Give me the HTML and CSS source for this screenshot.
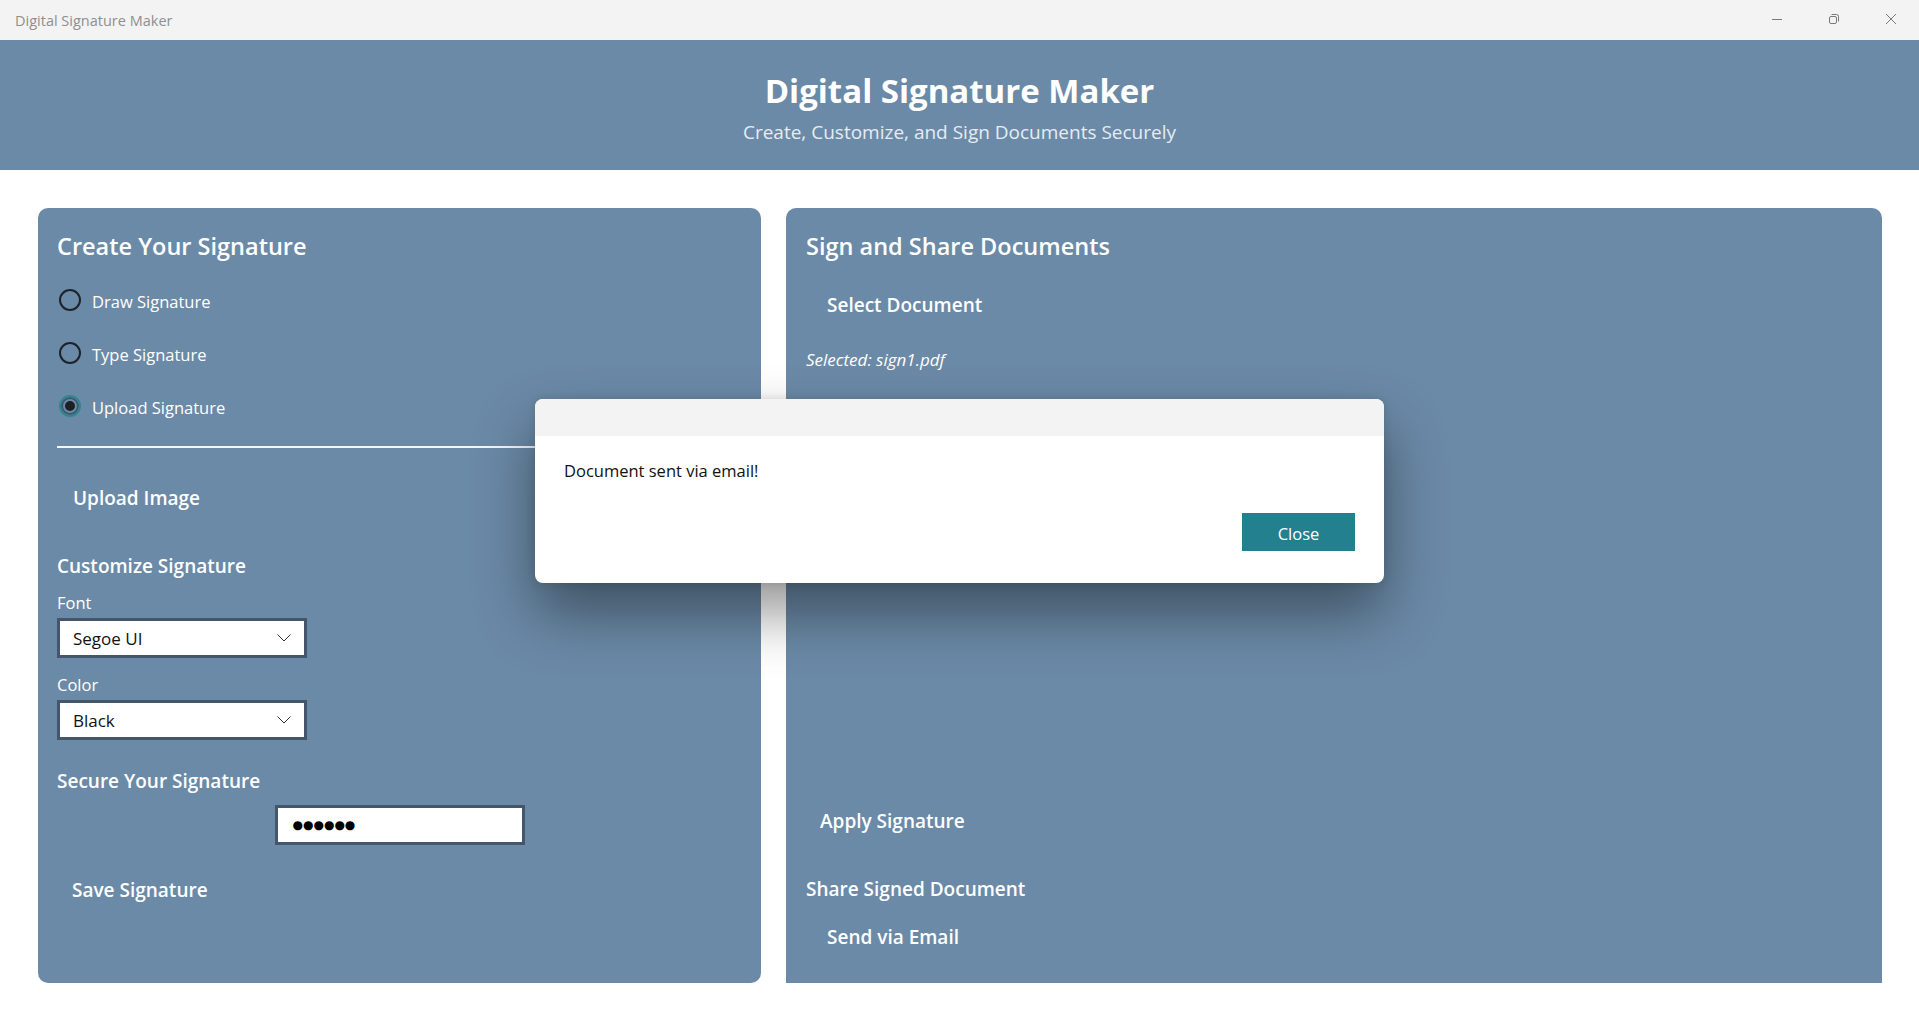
FILE: index.html
```html
<!DOCTYPE html>
<html lang="en">
<head>
  <meta charset="UTF-8">
  <title>Digital Signature Maker</title>
  <link rel="stylesheet" href="styles.css">
</head>
<body>
  <!-- window chrome -->
  <div class="titlebar">
    <span class="app-name">Digital Signature Maker</span>
    <div class="caption">
      <span class="cap-btn">
        <svg width="12" height="12" viewBox="0 0 12 12"><path d="M1 6.5h10" stroke="#7a7a7a" stroke-width="1"/></svg>
      </span>
      <span class="cap-btn">
        <svg width="12" height="12" viewBox="0 0 12 12" fill="none" stroke="#7a7a7a" stroke-width="1">
          <rect x="1.5" y="3.5" width="7" height="7" rx="1.5"/>
          <path d="M3.5 1.5h5a2 2 0 0 1 2 2v5"/>
        </svg>
      </span>
      <span class="cap-btn">
        <svg width="12" height="12" viewBox="0 0 12 12"><path d="M1 1l10 10M11 1L1 11" stroke="#7a7a7a" stroke-width="1"/></svg>
      </span>
    </div>
  </div>

  <header class="app-header">
    <h1>Digital Signature Maker</h1>
    <p>Create, Customize, and Sign Documents Securely</p>
  </header>

  <main class="content">
    <section class="panel panel-left">
      <h2>Create Your Signature</h2>

      <div class="radio-list">
        <label class="radio"><span class="dot"></span><span class="radio-text">Draw Signature</span></label>
        <label class="radio"><span class="dot"></span><span class="radio-text">Type Signature</span></label>
        <label class="radio checked"><span class="dot"></span><span class="radio-text">Upload Signature</span></label>
      </div>

      <div class="divider"></div>

      <button class="flat-btn upload-btn">Upload Image</button>

      <h3 class="sub-head customize">Customize Signature</h3>
      <div class="field-label font-label">Font</div>
      <div class="combo">
        <span>Segoe UI</span>
        <svg width="14" height="8" viewBox="0 0 14 8"><path d="M0.5 0.5L7 7L13.5 0.5" fill="none" stroke="#333" stroke-width="1"/></svg>
      </div>
      <div class="field-label color-label">Color</div>
      <div class="combo">
        <span>Black</span>
        <svg width="14" height="8" viewBox="0 0 14 8"><path d="M0.5 0.5L7 7L13.5 0.5" fill="none" stroke="#333" stroke-width="1"/></svg>
      </div>

      <h3 class="sub-head secure">Secure Your Signature</h3>
      <div class="password-box">●●●●●●</div>

      <button class="flat-btn save-btn">Save Signature</button>
    </section>

    <section class="panel panel-right">
      <h2>Sign and Share Documents</h2>
      <button class="flat-btn select-btn">Select Document</button>
      <div class="selected-file">Selected: sign1.pdf</div>

      <div class="preview"></div>

      <button class="flat-btn apply-btn">Apply Signature</button>
      <h3 class="sub-head share">Share Signed Document</h3>
      <button class="flat-btn email-btn">Send via Email</button>
    </section>
  </main>

  <!-- message dialog -->
  <div class="dialog">
    <div class="dialog-head"></div>
    <div class="dialog-body">
      <p>Document sent via email!</p>
      <div class="dialog-actions">
        <button class="close-btn">Close</button>
      </div>
    </div>
  </div>
</body>
</html>
```

FILE: styles.css
```css
* {
  box-sizing: border-box;
  margin: 0;
  padding: 0;
}

body {
  font-family: 'Open Sans', 'Noto Sans', sans-serif;
  background: #fff;
  width: 1919px;
  height: 1013px;
  overflow: hidden;
  position: relative;
  color: #fff;
}

.titlebar {
  height: 40px;
  background: #f3f3f3;
  display: flex;
  align-items: center;
  justify-content: space-between;
  padding-left: 15px;
}

.app-name {
  font-size: 14.5px;
  color: #8f8f8f;
}

.caption {
  display: flex;
  height: 100%;
}

.cap-btn {
  width: 57px;
  display: flex;
  align-items: center;
  justify-content: center;
  padding-bottom: 2px;
}

.app-header {
  height: 130px;
  background: #6b8aa7;
  text-align: center;
  padding-top: 29px;
}

.app-header h1 {
  font-size: 33px;
  font-weight: 700;
  line-height: 44px;
}

.app-header p {
  font-size: 19px;
  line-height: 26px;
  color: #e6ecf2;
  margin-top: 6px;
}

.content {
  display: grid;
  grid-template-columns: 723px 1096px;
  column-gap: 25px;
  padding: 38px 37px 30px 38px;
  height: 843px;
}

.panel {
  background: #6b8aa7;
  border-radius: 10px;
  padding-top: 23px;
  display: flex;
  flex-direction: column;
  align-items: flex-start;
}

.panel-left {
  padding-left: 19px;
  padding-right: 19px;
}

.panel-right {
  padding-left: 20px;
  border-radius: 10px 10px 0 0;
}

.panel h2 {
  font-size: 23.5px;
  font-weight: 600;
  line-height: 30px;
}

/* radios */
.radio-list {
  margin-top: 27px;
  display: flex;
  flex-direction: column;
  gap: 29px;
}

.radio {
  display: flex;
  align-items: flex-start;
  height: 24px;
}

.radio .dot {
  width: 22px;
  height: 22px;
  margin-top: 1px;
  margin-left: 2px;
  border: 2px solid #1d232b;
  border-radius: 50%;
  position: relative;
}

.radio.checked .dot {
  border-color: #2f8692;
  box-shadow: inset 0 0 0 2px #3f5868;
}

.radio.checked .dot::after {
  content: "";
  position: absolute;
  left: 4px;
  top: 4px;
  width: 10px;
  height: 10px;
  border-radius: 50%;
  background: #1b1f26;
}

.radio-text {
  font-size: 16.5px;
  line-height: 24px;
  padding-top: 2px;
  margin-left: 11px;
}

.divider {
  align-self: stretch;
  height: 2px;
  background: #f4f6f8;
  margin-top: 28px;
}

/* text-only buttons */
.flat-btn {
  background: none;
  border: none;
  color: #fff;
  font-family: inherit;
  font-size: 19px;
  font-weight: 600;
  line-height: 36px;
  height: 36px;
  padding: 0 16px;
}

.upload-btn {
  margin-top: 32px;
}

.sub-head {
  font-size: 19px;
  font-weight: 600;
  line-height: 24px;
}

.customize {
  margin-top: 38px;
}

.field-label {
  font-size: 16.5px;
  line-height: 22px;
}

.font-label {
  margin-top: 14px;
}

.color-label {
  margin-top: 16px;
}

.combo {
  width: 250px;
  height: 40px;
  margin-top: 4px;
  background: #fff;
  border: 3px solid #44566b;
  color: #111;
  font-size: 17px;
  display: flex;
  align-items: center;
  justify-content: space-between;
  padding: 0 13px 0 13px;
}

.secure {
  margin-top: 29px;
}

.password-box {
  align-self: center;
  width: 250px;
  height: 40px;
  margin-top: 12px;
  background: #fff;
  border: 3px solid #44566b;
  color: #000;
  font-family: 'DejaVu Sans', sans-serif;
  font-size: 12px;
  line-height: 34px;
  padding-left: 15px;
}

.save-btn {
  margin-top: 27px;
  padding-left: 15px;
}

/* right side */
.select-btn {
  margin-top: 26px;
  padding-left: 21px;
}

.selected-file {
  font-size: 17px;
  font-style: italic;
  line-height: 22px;
  margin-top: 26px;
}

.preview {
  height: 432px;
}

.apply-btn {
  padding-left: 14px;
}

.share {
  margin-top: 38px;
}

.email-btn {
  margin-top: 18px;
  padding-left: 21px;
}

/* dialog */
.dialog {
  position: absolute;
  left: 535px;
  top: 399px;
  width: 849px;
  height: 184px;
  background: #fff;
  border-radius: 8px;
  overflow: hidden;
  box-shadow: 0 30px 60px rgba(0, 0, 0, 0.42), 0 0 10px rgba(0, 0, 0, 0.12);
  color: #111;
}

.dialog-head {
  height: 37px;
  background: #f3f3f3;
}

.dialog-body {
  padding: 24px 29px 0 29px;
}

.dialog-body p {
  font-size: 16.5px;
  line-height: 22px;
}

.dialog-actions {
  display: flex;
  justify-content: flex-end;
  margin-top: 31px;
}

.close-btn {
  width: 113px;
  height: 38px;
  background: #23808f;
  border: none;
  color: #fff;
  font-family: inherit;
  font-size: 16.5px;
  padding-top: 2px;
}
```
